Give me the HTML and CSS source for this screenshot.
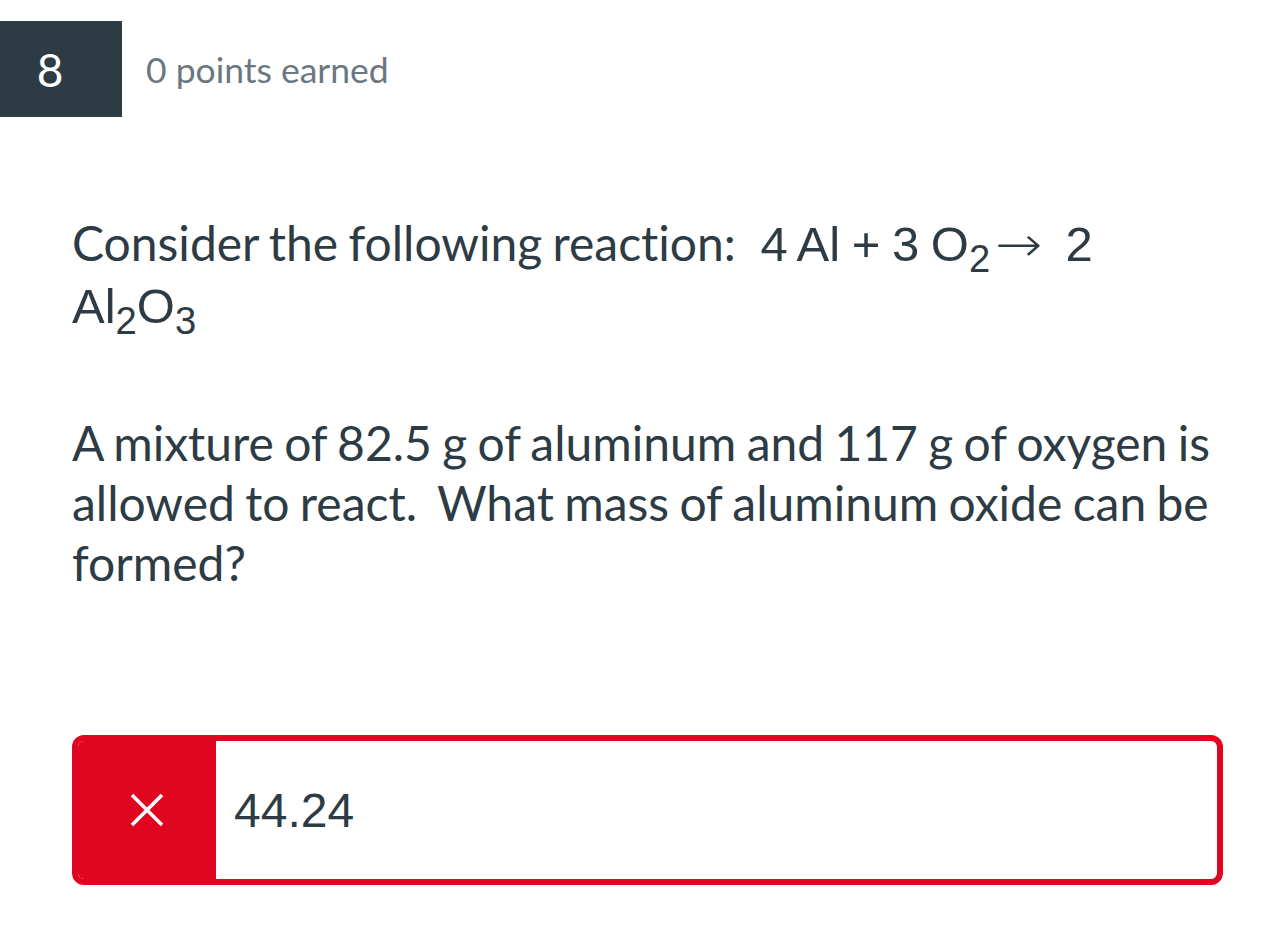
FILE: index.html
```html
<!DOCTYPE html>
<html lang="en">
<head>
<meta charset="utf-8">
<title>Question 8</title>
<link rel="stylesheet" href="styles.css">
</head>
<body>
<div class="page">
  <div class="header">
    <div class="qnum">8</div>
    <div class="points">0 points earned</div>
  </div>
  <div class="question">
    <p class="para first">Consider the following reaction:&nbsp; <span class="eq">4 Al + 3 O<sub>2</sub><span class="arrow">→</span>&nbsp; 2 Al<sub>2</sub>O<sub>3</sub></span></p>
    <p class="para second">A mixture of 82.5 g of aluminum and 117 g of oxygen is allowed to react.&nbsp; What mass of aluminum oxide can be formed?</p>
  </div>
  <div class="answer">
    <div class="mark">
      <svg width="34" height="34" viewBox="0 0 34 34" aria-hidden="true">
        <path d="M2 2 L32 32 M32 2 L2 32" stroke="#ffffff" stroke-width="3.6" stroke-linecap="butt" fill="none"/>
      </svg>
    </div>
    <div class="value">44.24</div>
  </div>
</div>
</body>
</html>
```

FILE: styles.css
```css
html, body {
  margin: 0;
  padding: 0;
  background: #ffffff;
}

body {
  font-family: Lato, "Noto Sans", sans-serif;
  color: #2d3b45;
  font-variant-ligatures: none;
}

.page {
  padding-top: 21px;
}

.header {
  display: flex;
  align-items: center;
  gap: 24px;
}

.qnum {
  width: 122px;
  height: 96px;
  box-sizing: border-box;
  padding-right: 22px;
  background: #2d3b45;
  color: #ffffff;
  font-size: 46px;
  display: flex;
  align-items: center;
  justify-content: center;
}

.points {
  font-size: 35.5px;
  color: #6b7780;
}

.question {
  margin: 96px 0 0 72px;
  width: 1140px;
  font-size: 48px;
  line-height: 60px;
  word-spacing: -2px;
}

.para {
  margin: 0;
}

.second {
  margin-top: 77px;
}

.eq {
  font-family: "Liberation Sans", Arial, sans-serif;
  font-size: 49px;
  word-spacing: -2px;
  margin-left: 4px;
}

.eq sub {
  font-size: 0.78em;
  vertical-align: -11px;
  line-height: 0;
}

.arrow {
  font-family: "DejaVu Sans", sans-serif;
  font-weight: 200;
  display: inline-block;
  transform: scaleX(1.15);
  margin: 0 3px 0 8px;
}

.answer {
  margin: 142px 0 0 72px;
  width: 1151px;
  height: 150px;
  box-sizing: border-box;
  border: 6px solid #e0061f;
  border-radius: 12px;
  display: flex;
  align-items: stretch;
  overflow: hidden;
}

.mark {
  width: 138px;
  background: #e0061f;
  display: flex;
  align-items: center;
  justify-content: center;
}

.value {
  display: flex;
  align-items: center;
  padding-left: 18px;
  font-family: "Liberation Sans", Arial, sans-serif;
  font-size: 48px;
  color: #2d3b45;
}
```
